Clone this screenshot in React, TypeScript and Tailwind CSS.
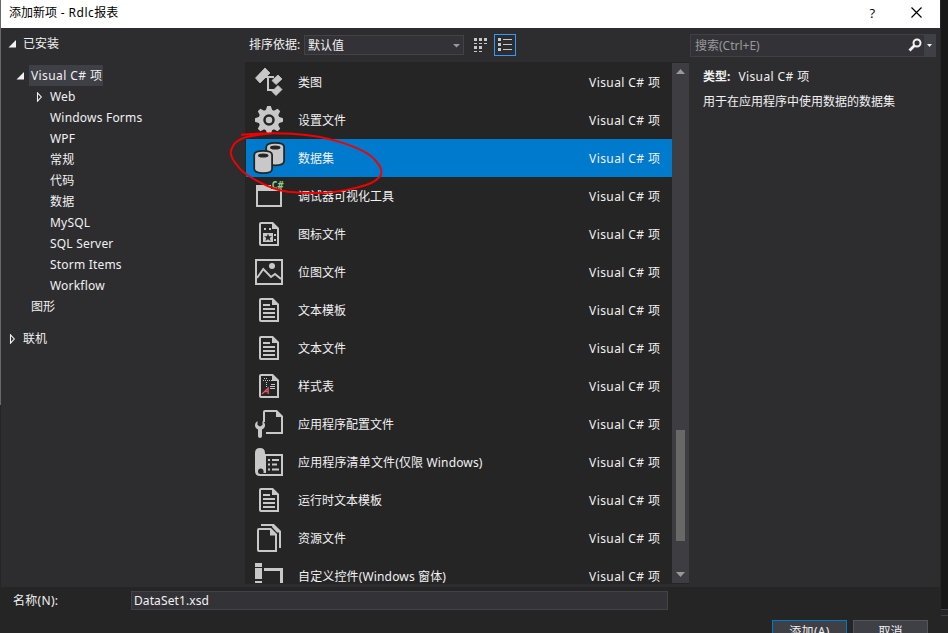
import React, { useState } from 'react';

const DocFrame = () => (
  <>
    <path d="M8 5H19.5L25 10.5V27H8Q7 27 7 26V6Q7 5 8 5Z" stroke="#c8c8c8" strokeWidth="2" />
    <path d="M19 4L26 11H19Z" fill="#c8c8c8" />
  </>
);

const TextDocIcon = () => (
  <>
    <DocFrame />
    <path d="M10 11H17M10 15H22M10 19H22M10 23H22" stroke="#c8c8c8" strokeWidth="2" />
  </>
);

const icons: Record<string, React.ReactNode> = {
  diagram: (
    <>
      <path d="M12 2L17 7L7 17L2.5 12Z M25 9L29 13L23 18.5L19 14.5Z M25 19.5L29 23.5L23 29.5L19 25.5Z" fill="#c8c8c8" stroke="#c8c8c8" strokeWidth=".8" strokeLinejoin="round" />
      <path d="M12 11H21M15 11V24H21" stroke="#c8c8c8" strokeWidth="2" />
    </>
  ),
  gear: (
    <>
      <g fill="#c8c8c8">
        <circle cx="16" cy="16" r="10.5" />
        {[0, 45, 90, 135, 180, 225, 270, 315].map(a => (
          <path key={a} d="M12.5 7L14.2 2H17.8L19.5 7Z" transform={`rotate(${a} 16 16)`} />
        ))}
      </g>
      <circle cx="16" cy="16" r="4.5" stroke="#252526" strokeWidth="2.5" />
    </>
  ),
  database: (
    <g fill="#c8c8c8" stroke="#252526" strokeWidth="1.8">
      <path d="M13.2 5C13.2 2.3 17 .9 22.2 .9S31.1 2.3 31.1 5V19C31.1 22 27 23.3 22.2 23.3S13.2 22 13.2 19Z" />
      <ellipse cx="22.2" cy="5.6" rx="5.2" ry="2" fill="#252526" stroke="none" />
      <path d="M1.2 13C1.2 10.3 5 8.9 10.2 8.9S19.1 10.3 19.1 13V27C19.1 30 15 31.1 10.2 31.1S1.2 30 1.2 27Z" />
      <ellipse cx="10.2" cy="13.6" rx="5.2" ry="2" fill="#252526" stroke="none" />
    </g>
  ),
  visualizer: (
    <>
      <path d="M3 5H18V9H29V27H3ZM5 11V25H27V11Z" fill="#c8c8c8" fillRule="evenodd" />
      <text x="18.4" y="8.6" fill="#89d185" className="font-['DejaVu_Sans_Mono'] text-[10px] font-bold">C#</text>
    </>
  ),
  icon: (
    <>
      <DocFrame />
      <path d="M11 10H13V12H11ZM16 10H18V12H16ZM21 16H23V18H21ZM21 21H23V23H21ZM10 15H20V24H10Z" fill="#c8c8c8" />
      <path d="M15 15.5L16 18.2H19L16.7 20L17.6 23L15 21.2L12.4 23L13.3 20L11 18.2H14Z" fill="#252526" />
    </>
  ),
  image: (
    <>
      <path d="M3 4H29V28H3Z M4 22L10.3 13L18 21L22 18L28 23" stroke="#c8c8c8" strokeWidth="2" />
      <circle cx="19" cy="10" r="3" fill="#c8c8c8" />
    </>
  ),
  text: <TextDocIcon />,
  style: (
    <>
      <DocFrame />
      <path d="M11 8.5H12M13 8.5H14M10 10.5H19M13.5 12V17" stroke="#c8c8c8" strokeWidth="1" strokeDasharray="1 1" />
      <path d="M18 14.5H22M17 16.5H22M17 18.5H22" stroke="#c8c8c8" strokeWidth="1" />
      <path d="M9 24L15.2 18V24M11.5 21.5H15" stroke="#e05561" strokeWidth="1.3" />
    </>
  ),
  config: (
    <>
      <path d="M11 14V4Q11 3 12 3H23.5L29 8.5V25H13" stroke="#c8c8c8" strokeWidth="2" />
      <path d="M23 2L30 9H23Z" fill="#c8c8c8" />
      <path d="M4.5 13C1 15 1.2 20 5 21.5V28Q5 30 7 30T9 28V21.5C13 20 13 15 9.5 13V17L7 18.5L4.5 17Z" fill="#c8c8c8" />
    </>
  ),
  manifest: (
    <>
      <path d="M2 7Q2 2 7 2T12 7V8H30V30H7Q2 30 2 25ZM12 10V27H10.5Q11.5 23 8 22.5Q5 22.5 5 25.5Q5 28 7.5 28H28V10Z" fill="#c8c8c8" fillRule="evenodd" />
      <path d="M10 10H13V27H10.8Q11.3 23 9 22Z" fill="#c8c8c8" />
      <path d="M15 14H17M19 14H26M15 18.5H17M19 18.5H24M15 23.5H17M19 23.5H26" stroke="#c8c8c8" strokeWidth="2" />
    </>
  ),
  resource: (
    <>
      <path d="M8 3H20.5L27 9.5V26" stroke="#c8c8c8" strokeWidth="2" />
      <path d="M19.5 2L28 10.5H24L19 5Z" fill="#c8c8c8" />
      <path d="M6 7H17.5L23 12.5V29H6Q5 29 5 28V8Q5 7 6 7Z" stroke="#c8c8c8" strokeWidth="2" />
      <path d="M17 6L24 13.5H17Z" fill="#c8c8c8" />
    </>
  ),
  control: <path d="M2 3H9V7H2ZM2 8H9V19H2ZM2 21H9V30H2ZM11 8H30V30H27V11H11Z" fill="#c8c8c8" />,
};

const items = [
  { name: '类图', icon: 'diagram' },
  { name: '设置文件', icon: 'gear' },
  { name: '数据集', icon: 'database' },
  { name: '调试器可视化工具', icon: 'visualizer' },
  { name: '图标文件', icon: 'icon' },
  { name: '位图文件', icon: 'image' },
  { name: '文本模板', icon: 'text' },
  { name: '文本文件', icon: 'text' },
  { name: '样式表', icon: 'style' },
  { name: '应用程序配置文件', icon: 'config' },
  { name: '应用程序清单文件(仅限 Windows)', icon: 'manifest' },
  { name: '运行时文本模板', icon: 'text' },
  { name: '资源文件', icon: 'resource' },
  { name: '自定义控件(Windows 窗体)', icon: 'control' },
];

const categories = ['Web', 'Windows Forms', 'WPF', '常规', '代码', '数据', 'MySQL', 'SQL Server', 'Storm Items', 'Workflow'];

const TypeLabel = () => (
  <span>
    <span className="tracking-[0.4px]">Visual C# </span>项
  </span>
);

function Expander({ open = false }: { open?: boolean }) {
  return (
    <svg width="8" height="10" viewBox="0 0 8 10" className="shrink-0" fill="none">
      {open ? <path d="M8 1V8.5H.5Z" fill="#f1f1f1" /> : <path d="M2.5 .8L6.3 5L2.5 9.2Z" stroke="#f1f1f1" strokeWidth="1.1" />}
    </svg>
  );
}

function Sidebar() {
  return (
    <div className="w-[244px] shrink-0 pt-[5px]">
      <div className="flex h-[21px] items-center gap-[7px] pl-[7px]">
        <Expander open />
        <span>已安装</span>
      </div>
      <div className="mt-[11px] flex h-[21px] items-center gap-[5px] pl-[15px]">
        <Expander open />
        <span className="flex h-[21px] w-[74px] items-center bg-[#3f3f46] pl-[2px]">
          <TypeLabel />
        </span>
      </div>
      {categories.map(name => (
        <div key={name} className="flex h-[21px] items-center gap-[7px] pl-[34px]">
          {name === 'Web' ? <Expander /> : <span className="w-2" />}
          <span className="tracking-[0.2px]">{name}</span>
        </div>
      ))}
      <div className="flex h-[21px] items-center pl-[30px]">图形</div>
      <div className="mt-[11px] flex h-[21px] items-center gap-[7px] pl-[7px]">
        <Expander />
        <span>联机</span>
      </div>
    </div>
  );
}

function SortBar() {
  return (
    <div className="flex h-[34px] items-center pl-1">
      <span className="w-[55px]">排序依据:</span>
      <div className="flex h-5 w-[160px] items-center justify-between border border-[#434346] bg-[#333337] pt-px pr-[3px] pl-[3px]">
        <span>默认值</span>
        <svg width="7" height="4" className="mt-px">
          <path d="M0 0H7L3.5 3.5Z" fill="#999" />
        </svg>
      </div>
      <svg width="14" height="14" className="ml-[9px]" fill="#c8c8c8">
        <path d="M1 0H4V3H1ZM6 0H9V3H6ZM11 0H14V3H11ZM1 5H4V6H1ZM6 5H9V6H6ZM11 5H14V6H11ZM1 8H4V11H1ZM6 8H9V11H6ZM1 13H4V14H1ZM6 13H9V14H6Z" />
      </svg>
      <div className="ml-[7px] flex h-[22px] w-[22px] items-center justify-center border border-[#3399ff]">
        <svg width="14" height="14" fill="#c8c8c8">
          <path d="M0 0H3V3H0ZM5 1H14V2H5ZM0 5H3V8H0ZM5 6H14V7H5ZM0 10H3V13H0ZM5 11H14V12H5Z" />
        </svg>
      </div>
    </div>
  );
}

function ScrollBar() {
  return (
    <div className="flex w-[17px] flex-col items-center bg-[#3e3e42]">
      <svg width="9" height="5" className="mt-[6px]">
        <path d="M0 5L4.5 0L9 5Z" fill="#999" />
      </svg>
      <div className="mt-[356px] h-[111px] w-[9px] bg-[#686868]" />
      <svg width="9" height="5" className="mt-[31px]">
        <path d="M0 0H9L4.5 5Z" fill="#999" />
      </svg>
    </div>
  );
}

export default function App() {
  const [selected, setSelected] = useState('数据集');

  return (
    <div className="relative flex h-[633px] w-[948px] overflow-hidden bg-[#181819] font-['Noto_Sans','Noto_Sans_CJK_SC',sans-serif] text-[12px] leading-[16px] whitespace-nowrap text-[#f1f1f1]">
      <div className="flex w-px flex-col">
        <div className="h-[405px] bg-[#68686a]" />
        <div className="flex-1 bg-[#252526]" />
      </div>
      <div className="flex w-[939px] flex-col bg-[#2d2d30]">
        <div className="flex h-7 shrink-0 items-center bg-white pb-[3px] pl-2 text-black">
          <span className="flex-1">
            添加新项<span className="tracking-[0.5px]"> - Rdlc</span>报表
          </span>
          <span className="mr-[36px] font-['Open_Sans'] text-[13px]">?</span>
          <svg width="11" height="11" className="mr-[18px]">
            <path d="M.5 .5L10.5 10.5M10.5 .5L.5 10.5" stroke="#000" strokeWidth="1.2" />
          </svg>
        </div>

        <div className="flex h-[559px] shrink-0">
          <Sidebar />
          <div className="w-[444px]">
            <SortBar />
            <div className="flex h-[522px] bg-[#252526] pt-px pb-px">
              <div className="w-[427px] overflow-hidden pl-px">
                {items.map(item => (
                  <div
                    key={item.name}
                    onClick={() => setSelected(item.name)}
                    className={`flex h-[38px] items-center pr-3 pl-[7px] ${item.name === selected ? 'bg-[#007acc]' : ''}`}
                  >
                    <svg width="32" height="32" viewBox="0 0 32 32" fill="none" className="shrink-0">
                      {icons[item.icon]}
                    </svg>
                    <div className="ml-[13px] flex flex-1 justify-between pt-[2px]">
                      <span className={item.name.includes('Windows') ? 'tracking-[0.15px]' : ''}>{item.name}</span>
                      <TypeLabel />
                    </div>
                  </div>
                ))}
              </div>
              <ScrollBar />
            </div>
          </div>

          <div className="w-[251px] pt-[6px] pl-px">
            <div className="flex h-[23px] w-[246px] border border-[#3f3f46] bg-[#333337] text-[#999]">
              <span className="flex-1 pt-[3px] pl-1">搜索(Ctrl+E)</span>
              <svg width="14" height="14" className="mt-[3px] mr-[2px]" fill="none" stroke="#f1f1f1">
                <circle cx="9" cy="5" r="3.5" strokeWidth="2" />
                <path d="M6.5 7.5L1.5 12.5" strokeWidth="2.8" />
              </svg>
              <div className="flex w-[11px] items-center justify-center bg-[#3f3f46]">
                <svg width="5" height="3">
                  <path d="M0 0H5L2.5 3Z" fill="#f1f1f1" />
                </svg>
              </div>
            </div>
            <div className="mt-3 flex gap-2 pl-[13px]">
              <span className="font-bold">类型:</span>
              <TypeLabel />
            </div>
            <p className="mt-[9px] pl-[13px]">用于在应用程序中使用数据的数据集</p>
          </div>
        </div>

        <div className="h-[46px] bg-[#252526] pt-1">
          <div className="flex h-[19px] items-center pl-3">
            <span className="w-[118px] tracking-[0.3px]">名称(N):</span>
            <div className="flex h-[19px] w-[537px] items-center border border-[#434346] bg-[#333337] pl-[2px] tracking-[0.1px]">DataSet1.xsd</div>
          </div>
          <div className="mt-[10px] flex justify-end gap-[6px] pr-3">
            <button className="h-[23px] w-[75px] border border-[#007acc] bg-[#3f3f46] tracking-[0.3px]">添加(A)</button>
            <button className="h-[23px] w-[75px] border border-[#555555] bg-[#3f3f46]">取消</button>
          </div>
        </div>
      </div>
      <div className="flex w-2 flex-col border-l border-[#252526]">
        <div className="h-[609px]" />
        <div className="h-[7px] border-y border-[#3f3f46] bg-[#252526]" />
        <div className="flex-1 bg-[#252526]" />
      </div>

      {/* hand-drawn marker around the data set entry */}
      <svg width="160" height="70" className="pointer-events-none absolute top-[128px] left-[226px]" fill="none">
        <path
          d="M15 6.7C35 5 52 5 66 5.8C87 7 102 10 116 14.7C132 20 143 25 148 31C155 38 158 45 153 49.5C148 55 138 58 132 59.3C121 62 111 64 99 64.7C84 65.5 74 65 62 63.7C51 62 43 59 36 55.3C25 50 17 45 12.3 38.7C7 33 3 26 5.8 20.5C8 14 16 9 29 7.5C35 6.5 41 5.5 47 5.5"
          stroke="#f50000"
          strokeWidth="1.9"
        />
      </svg>
    </div>
  );
}
